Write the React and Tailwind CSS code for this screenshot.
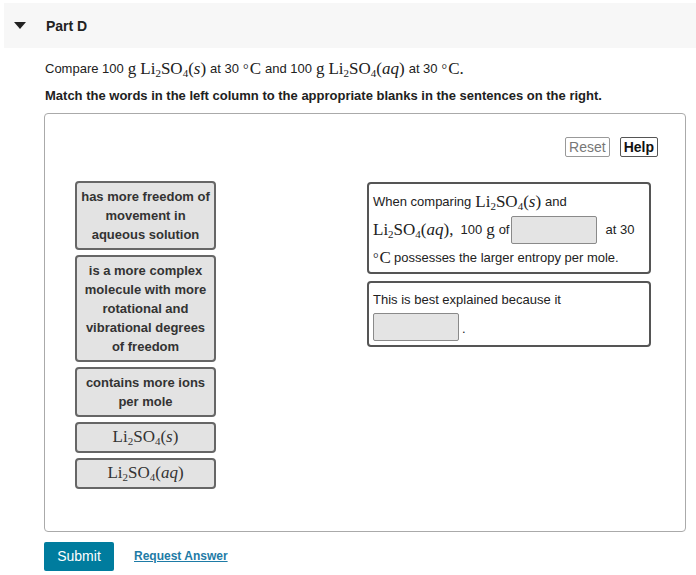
import React from 'react';

const sans = { fontFamily: '"Liberation Sans", Arial, sans-serif' };

const Chem = ({ state, className = '' }) => (
  <span className={`font-['Liberation_Serif',serif] text-[17px] ${className}`}>
    Li<sub className="text-[11px]">2</sub>SO<sub className="text-[11px]">4</sub>(<i>{state}</i>)
  </span>
);

const Deg = ({ dot = false }) => (
  <span className="font-['Liberation_Serif',serif] text-[17px]">
    <span className="text-[14px] mr-[1px]">°</span>C{dot ? '.' : ''}
  </span>
);

const Blank = () => (
  <span className="inline-block w-[86px] h-[28px] bg-[#e4e4e4] border border-[#8a8a8a] rounded-[2px] align-middle" />
);

const chips = [
  { key: 'a', text: 'has more freedom of movement in aqueous solution' },
  { key: 'b', text: 'is a more complex molecule with more rotational and vibrational degrees of freedom' },
  { key: 'c', text: 'contains more ions per mole' },
];

export default function App() {
  return (
    <div className="w-[696px] h-[575px] bg-white text-[#212121] text-[13px]" style={sans}>
      {/* Header */}
      <div className="ml-[4px] mt-[3px] h-[45px] bg-[#f7f7f7] flex items-center">
        <svg width="12" height="8" viewBox="0 0 12 8" className="ml-[10px] mt-[1px]">
          <path d="M0 0 L12 0 L6 7 Z" fill="#222" />
        </svg>
        <span className="ml-[20px] mt-[1px] font-bold text-[14px] text-[#222]">Part D</span>
      </div>

      <div className="pl-[45px]">
        <p className="mt-[9px] h-[24px] flex items-center gap-[4px]">
          <span>Compare 100</span>
          <span className="font-['Liberation_Serif',serif] text-[17px]">g</span>
          <Chem state="s" />
          <span>at 30</span>
          <Deg />
          <span>and 100</span>
          <span className="font-['Liberation_Serif',serif] text-[17px]">g</span>
          <Chem state="aq" />
          <span>at 30</span>
          <Deg dot />
        </p>
        <p className="mt-[5px] font-bold text-[13px]">
          Match the words in the left column to the appropriate blanks in the sentences on the right.
        </p>
      </div>

      {/* Drag-and-drop box */}
      <div className="ml-[44px] mt-[7px] w-[642px] h-[419px] border border-[#aaa] rounded-[4px] pt-[23px]">
        <div className="flex justify-end gap-[10px] pr-[27px]">
          <button className="h-[20px] px-[3px] border border-[#999] rounded-[2px] text-[14px] text-[#777] leading-none">
            Reset
          </button>
          <button className="h-[20px] px-[3px] border border-[#555] rounded-[2px] text-[14px] font-bold text-[#111] leading-none">
            Help
          </button>
        </div>

        <div className="mt-[24px] pl-[30px] flex gap-[151px]">
          {/* Left column */}
          <div className="w-[141px] flex flex-col gap-[5px]">
            {chips.map((c) => (
              <div
                key={c.key}
                className="border-2 border-[#666] rounded-[4px] bg-[#e3e3e3] text-center font-bold text-[13px] text-[#333] leading-[19px] px-[4px] py-[4px]"
              >
                {c.text}
              </div>
            ))}
            <div className="h-[31px] border-2 border-[#666] rounded-[4px] bg-[#e3e3e3] flex items-center justify-center text-[#333]">
              <Chem state="s" />
            </div>
            <div className="h-[31px] border-2 border-[#666] rounded-[4px] bg-[#e3e3e3] flex items-center justify-center text-[#333]">
              <Chem state="aq" />
            </div>
          </div>

          {/* Right column */}
          <div className="w-[284px] flex flex-col gap-[7px] mt-[1px]">
            <div className="h-[92px] border-2 border-[#555] rounded-[4px] px-[4px] pt-[4px] text-[13px] text-[#222]">
              <div className="h-[28px] flex items-center gap-[4px]">
                <span>When comparing</span>
                <Chem state="s" />
                <span>and</span>
              </div>
              <div className="h-[28px] flex items-center">
                <Chem state="aq" />
                <span className="font-['Liberation_Serif',serif] text-[17px]">,</span>
                <span className="ml-[7px]">100</span>
                <span className="ml-[4px] font-['Liberation_Serif',serif] text-[17px]">g</span>
                <span className="ml-[4px]">of</span>
                <span className="ml-[2px]"><Blank /></span>
                <span className="ml-[8px]">at 30</span>
              </div>
              <div className="h-[28px] flex items-center gap-[3px]">
                <Deg />
                <span>possesses the larger entropy per mole.</span>
              </div>
            </div>
            <div className="h-[66px] border-2 border-[#555] rounded-[4px] px-[4px] pt-[6px] text-[13px] text-[#222]">
              <div className="h-[22px] flex items-center">This is best explained because it</div>
              <div className="mt-[2px] flex items-end">
                <Blank />
                <span className="ml-[3px] mb-[6px] leading-none">.</span>
              </div>
            </div>
          </div>
        </div>
      </div>

      {/* Footer */}
      <div className="ml-[44px] mt-[10px] flex items-center">
        <button className="w-[70px] h-[29px] bg-[#007c9e] text-white text-[14px] rounded-[2px]">Submit</button>
        <a href="#" className="ml-[20px] text-[#1e7ba6] font-bold text-[12px] underline">Request Answer</a>
      </div>
    </div>
  );
}
